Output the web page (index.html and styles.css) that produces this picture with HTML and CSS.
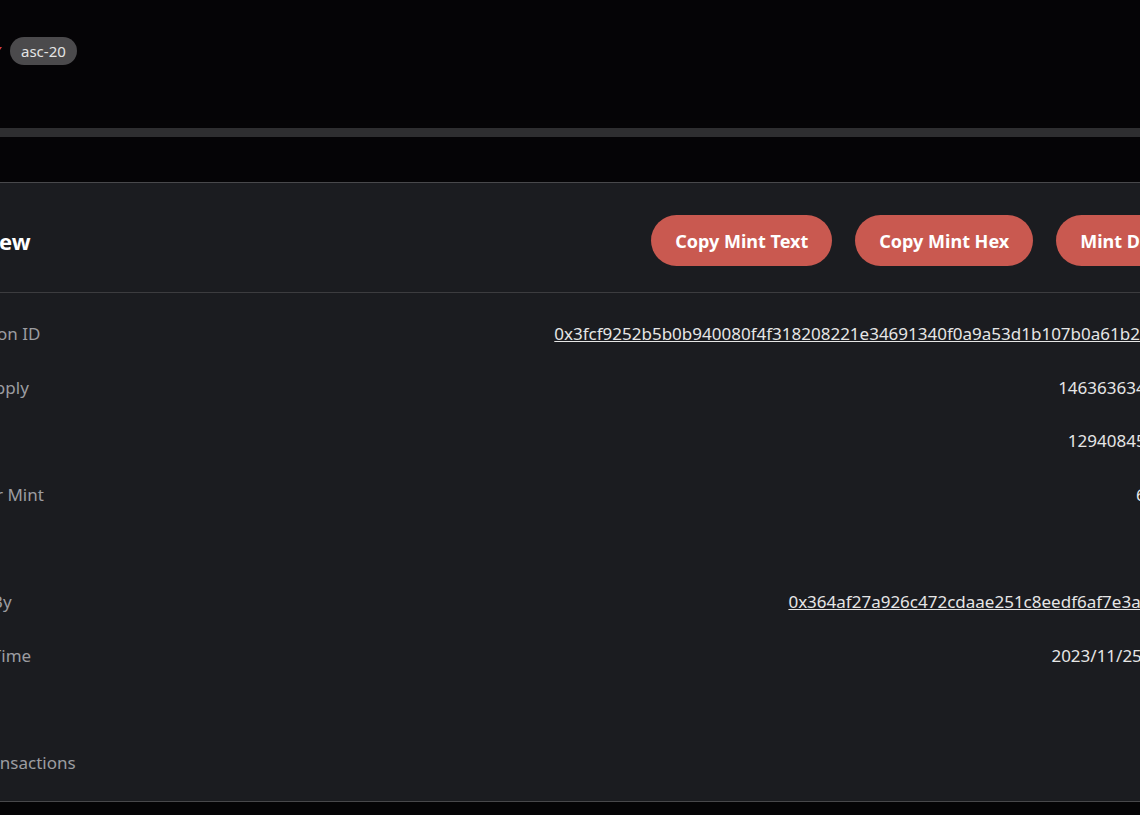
FILE: index.html
```html
<!DOCTYPE html>
<html lang="en">
<head>
<meta charset="utf-8">
<title>asc-20 Overview</title>
<link rel="stylesheet" href="styles.css">
</head>
<body>
<div class="page">
  <header class="hero">
    <div class="token">
      <span class="token-name">ASCS</span>
      <svg class="flame" viewBox="0 0 16 16" width="16" height="16" aria-hidden="true">
        <path d="M2 4 L14 4 L8 13 Z" fill="#d83a3a"/>
      </svg>
      <span class="badge">asc-20</span>
    </div>
  </header>
  <div class="tabbar"></div>
  <section class="card">
    <div class="card-head">
      <h2 class="card-title">Overview</h2>
      <div class="actions">
        <button class="btn">Copy Mint Text</button>
        <button class="btn">Copy Mint Hex</button>
        <button class="btn">Mint Detail</button>
      </div>
    </div>
    <dl class="rows">
      <div class="row"><dt>Inscription ID</dt><dd><a href="#">0x3fcf9252b5b0b940080f4f318208221e34691340f0a9a53d1b107b0a61b2c4d8</a><svg class="copy" viewBox="0 0 16 16" width="18" height="18" aria-hidden="true"><rect x="5" y="5" width="9" height="9" rx="1.5" fill="none" stroke="#9c9ca0" stroke-width="1.4"/><path d="M3 11V3.5A1.5 1.5 0 0 1 4.5 2H11" fill="none" stroke="#9c9ca0" stroke-width="1.4"/></svg></dd></div>
      <div class="row"><dt>Total Supply</dt><dd>146363634000000</dd></div>
      <div class="row"><dt>Minted</dt><dd>12940845321000</dd></div>
      <div class="row"><dt>Limit Per Mint</dt><dd>6000000</dd></div>
      <div class="row"><dt>Holders</dt><dd>5289</dd></div>
      <div class="row"><dt>Deploy By</dt><dd><a href="#">0x364af27a926c472cdaae251c8eedf6af7e3a91c2</a><svg class="copy" viewBox="0 0 16 16" width="18" height="18" aria-hidden="true"><rect x="5" y="5" width="9" height="9" rx="1.5" fill="none" stroke="#9c9ca0" stroke-width="1.4"/><path d="M3 11V3.5A1.5 1.5 0 0 1 4.5 2H11" fill="none" stroke="#9c9ca0" stroke-width="1.4"/></svg></dd></div>
      <div class="row"><dt>Deploy Time</dt><dd>2023/11/25 9:28:09</dd></div>
      <div class="row"><dt>Status</dt><dd>Ended</dd></div>
      <div class="row"><dt>Total Transactions</dt><dd>30517</dd></div>
    </dl>
  </section>
</div>
</body>
</html>
```
FILE: styles.css
```css
html, body {
  margin: 0;
  padding: 0;
  background: #050406;
  overflow: hidden;
  font-family: "Noto Sans", "Open Sans", sans-serif;
}

.page {
  width: 1320px;
  margin-left: -92px;
}

.hero {
  height: 128px;
  box-sizing: border-box;
  padding: 37px 0 0 0;
}

.token {
  display: flex;
  align-items: center;
  height: 28px;
}

.token-name {
  width: 80px;
  visibility: hidden;
  font-weight: 700;
  color: #fff;
}

.flame {
  display: block;
  margin-right: 6px;
}

.badge {
  display: inline-flex;
  align-items: center;
  height: 28px;
  padding: 0 11px;
  border-radius: 14px;
  background: #4b4a4c;
  color: #e4e4e4;
  font-size: 15px;
}

.tabbar {
  height: 9px;
  background: #2e2e30;
  margin-bottom: 45px;
}

.card {
  background: #1b1c20;
  border-top: 1px solid #48484b;
  border-bottom: 1px solid #48484b;
  border-radius: 12px;
  padding: 0 24px;
}

.card-head {
  height: 110px;
  box-sizing: border-box;
  padding-top: 6px;
  display: flex;
  align-items: center;
  justify-content: space-between;
  border-bottom: 1px solid #3c3c3f;
}

.card-title {
  margin: 0 0 0 -5px;
  color: #ffffff;
  font-size: 22px;
  font-weight: 700;
}

.actions {
  display: flex;
  gap: 23px;
}

.btn {
  height: 51px;
  padding: 0 24px;
  border: none;
  border-radius: 26px;
  background: #c95950;
  color: #ffffff;
  font-family: "Noto Sans", "Open Sans", sans-serif;
  font-size: 18px;
  font-weight: 700;
}

.rows {
  margin: 0;
  padding: 14px 0 12px;
}

.row {
  display: flex;
  justify-content: space-between;
  align-items: center;
  padding: 16px 0;
  line-height: 21.6px;
  font-size: 17px;
}

.row dt {
  color: #9c9ca0;
}

.row dd {
  margin: 0;
  display: flex;
  align-items: center;
  gap: 8px;
  color: #e6e6e6;
  text-align: right;
}

.row dd a {
  color: #e6e6e6;
  text-decoration: underline;
}

.copy {
  display: block;
  flex: none;
}
```
